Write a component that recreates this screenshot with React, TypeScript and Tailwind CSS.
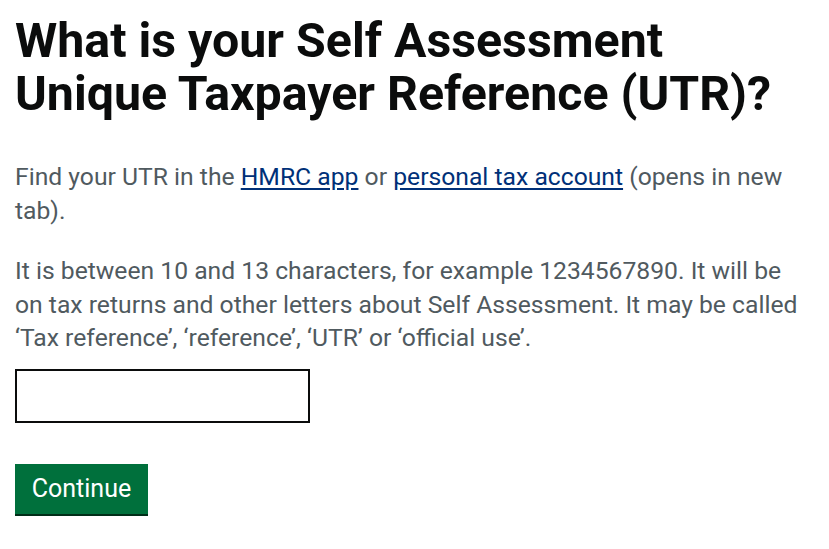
export default function App() {
  return (
    <div className="min-h-screen bg-white px-[15px] pt-[14px] font-['Roboto',sans-serif] text-[#0b0c0c]">
      <h1 className="text-[48.3px] font-bold leading-[53px]">
        What is your Self Assessment Unique Taxpayer Reference (UTR)?
      </h1>
      <p className="mt-[40px] text-[24.7px] leading-[33.5px] text-[#505a5f]">
        Find your UTR in the{" "}
        <a href="#" className="text-[#003078] underline underline-offset-[3px]">
          HMRC app
        </a>{" "}
        or{" "}
        <a href="#" className="text-[#003078] underline underline-offset-[3px]">
          personal tax account
        </a>{" "}
        (opens in new tab).
      </p>
      <p className="mt-[27px] text-[24.7px] leading-[33.5px] text-[#505a5f]">
        It is between 10 and 13 characters, for example 1234567890. It will be on tax returns and other
        letters about Self Assessment. It may be called ‘Tax reference’, ‘reference’, ‘UTR’ or ‘official
        use’.
      </p>
      <input
        type="text"
        aria-label="Unique Taxpayer Reference"
        className="mt-[14px] block h-[54px] w-[295px] border-2 border-[#0b0c0c] px-2 text-[24px] outline-none"
      />
      <button className="mt-[41px] h-[50px] w-[133px] bg-[#00703c] text-[25px] leading-none text-white shadow-[0_2px_0_#002d18]">
        Continue
      </button>
    </div>
  );
}
